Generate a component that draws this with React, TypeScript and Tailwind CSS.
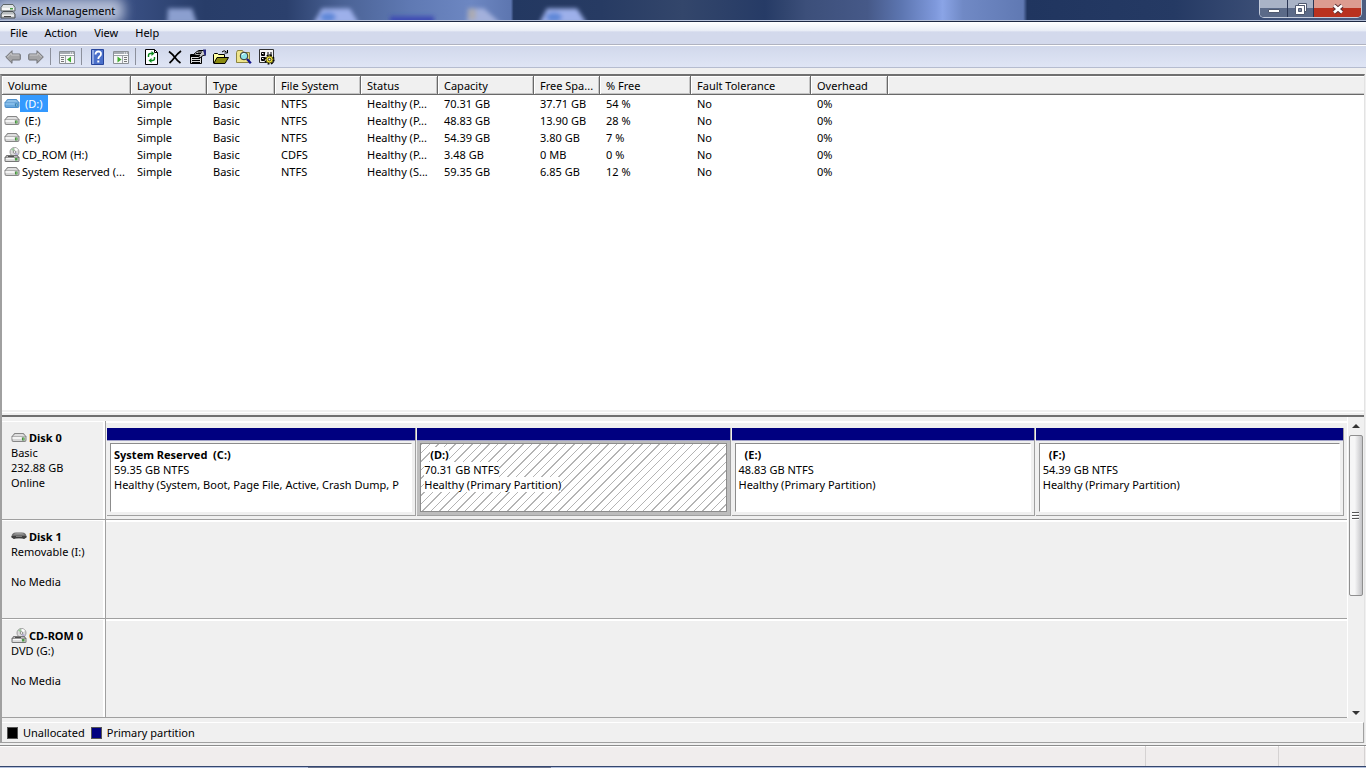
import type { ReactNode } from "react";
import clsx from "clsx";

type Volume = {
  name: string;
  fs: string;
  status: string;
  capacity: string;
  free: string;
  percent: string;
  icon: "drive" | "selected" | "cd";
};

const volumes: Volume[] = [
  { name: "(D:)", fs: "NTFS", status: "Healthy (P...", capacity: "70.31 GB", free: "37.71 GB", percent: "54 %", icon: "selected" },
  { name: "(E:)", fs: "NTFS", status: "Healthy (P...", capacity: "48.83 GB", free: "13.90 GB", percent: "28 %", icon: "drive" },
  { name: "(F:)", fs: "NTFS", status: "Healthy (P...", capacity: "54.39 GB", free: "3.80 GB", percent: "7 %", icon: "drive" },
  { name: "CD_ROM (H:)", fs: "CDFS", status: "Healthy (P...", capacity: "3.48 GB", free: "0 MB", percent: "0 %", icon: "cd" },
  { name: "System Reserved (...", fs: "NTFS", status: "Healthy (S...", capacity: "59.35 GB", free: "6.85 GB", percent: "12 %", icon: "drive" },
];

const columns = [
  { label: "Volume", width: "w-[129px]" },
  { label: "Layout", width: "w-[76px]" },
  { label: "Type", width: "w-[68px]" },
  { label: "File System", width: "w-[86px]" },
  { label: "Status", width: "w-[77px]" },
  { label: "Capacity", width: "w-[96px]" },
  { label: "Free Spa...", width: "w-[66px]" },
  { label: "% Free", width: "w-[91px]" },
  { label: "Fault Tolerance", width: "w-[120px]" },
  { label: "Overhead", width: "w-[77px]" },
];

const partitions = [
  { name: "System Reserved  (C:)", size: "59.35 GB NTFS", status: "Healthy (System, Boot, Page File, Active, Crash Dump, P", indent: false },
  { name: "(D:)", size: "70.31 GB NTFS", status: "Healthy (Primary Partition)", indent: true, selected: true },
  { name: "(E:)", size: "48.83 GB NTFS", status: "Healthy (Primary Partition)", indent: true },
  { name: "(F:)", size: "54.39 GB NTFS", status: "Healthy (Primary Partition)", indent: true },
];

function DriveIcon({ selected = false }: { selected?: boolean }) {
  return (
    <svg className="h-4 w-4 shrink-0" viewBox="0 0 16 16">
      <path d="M3.500 3h9l3 3.500v3.500q0 2-2 2h-11q-2 0-2-2v-3.500z" fill={selected ? "#4d8fcb" : "#868686"} />
      <path d="M4 4h8l2.500 2.500h-13z" fill={selected ? "#8dbfe8" : "#dedede"} />
      <path d="M1.500 7h13v3q0 1-1 1h-11q-1 0-1-1z" fill={selected ? "#6aa9df" : "#d6d6d6"} />
      <path d="M1.500 7h9v2h-9z" fill={selected ? "#84bce9" : "#f4f4f4"} />
      <path d="M11 7.500h2.500v3h-2.500z" fill={selected ? "#3f7fae" : "#4a8a45"} />
      <path d="M12 8h1v2h-1z" fill={selected ? "#74b4c8" : "#6fc062"} />
    </svg>
  );
}

function CdDriveIcon() {
  return (
    <svg className="h-4 w-4 shrink-0" viewBox="0 0 16 16">
      <circle cx="10.500" cy="5" r="4.500" fill="#dcdcdc" stroke="#9c9c9c" />
      <path d="M10.500 5L7 2.500Q8 1 10 1z" fill="#9cc79c" />
      <path d="M10.500 5l4 2q-1 2-3 2.200z" fill="#b9b4d4" />
      <path d="M10.500 5l.5-4q2 .3 3 1.800z" fill="#fff" />
      <circle cx="10.500" cy="5" r="1.300" fill="#fff" stroke="#777" strokeWidth=".8" />
      <path d="M2.500 8h11l2 2.500v3q0 1.500-1.500 1.500h-12q-1.500 0-1.500-1.500v-3z" fill="#777" />
      <path d="M3 9h10l1 1.500h-12z" fill="#bdbdbd" />
      <path d="M1.500 11h13v2.500q0 .5-.5.5h-12q-.5 0-.5-.5z" fill="#d8d8d8" />
      <path d="M2 11h8v1.200h-8z" fill="#fafafa" />
      <path d="M4 9h6v1h-6z" fill="#4f4f4f" />
      <path d="M11 11h2.500v2.500h-2.500z" fill="#4a9a45" />
    </svg>
  );
}

function RemovableIcon() {
  return (
    <svg className="h-4 w-4 shrink-0" viewBox="0 0 16 16">
      <path d="M.5 8q0-4.500 4.500-4.500h6q4.500 0 4.500 4.500l-2 1.500h-11z" fill="#6d6d6d" />
      <path d="M2.500 5.500q1-1.200 3.500-1.200h4q2.500 0 3.500 1.200z" fill="#a5a5a5" />
      <path d="M.5 7h15v1.500l-2.500 1.500q-1-1-5-1t-5 1L.5 8.500z" fill="#3e3e3e" />
      <path d="M5 7h6v1h-6z" fill="#7d7d7d" />
    </svg>
  );
}

function ArrowIcon({ flip = false }: { flip?: boolean }) {
  return (
    <svg className={clsx("h-4 w-4", flip && "-scale-x-100")} viewBox="0 0 16 16">
      <path d="M.7 8L7 1.700v3.300h7.500q.8 0 .8.800v4.400q0 .8-.8.800H7v3.300z" fill="#a4a4a6" stroke="#6f7074" />
      <path d="M2.500 8L6.200 4.200v1.800h8" fill="none" stroke="#c9c9cb" />
    </svg>
  );
}

function PaneIcon({ flip = false }: { flip?: boolean }) {
  return (
    <svg className="h-4 w-4" viewBox="0 0 16 16">
      <path d="M.5 2.500h15v12h-15z" fill="#f6f7f8" stroke="#8b9096" />
      <path d="M1 3h14v2h-14z" fill="#a6abb2" />
      <path d="M11 3.500h1v1h-1zM13 3.500h1v1h-1z" fill="#fff" />
      <path d="M1 5.500h14" stroke="#fff" />
      <path d="M1 6.500h14" stroke="#9da2a8" />
      {flip ? (
        <>
          <path d="M9.500 7v7" stroke="#9da2a8" />
          <path d="M11 8.500h3M11 10.500h3M11 12.500h3" stroke="#777" />
          <path d="M4.500 7.500v6l4-3z" fill="#3fae2e" />
        </>
      ) : (
        <>
          <path d="M6.500 7v7" stroke="#9da2a8" />
          <path d="M2 8.500h3M2 10.500h3M2 12.500h3" stroke="#777" />
          <path d="M12 7.500v6l-4-3z" fill="#3fae2e" />
        </>
      )}
    </svg>
  );
}

function HelpIcon() {
  return (
    <svg className="h-4 w-4" viewBox="0 0 16 16">
      <path d="M1.500.5h12v15h-12z" fill="#4a6fca" stroke="#27459c" />
      <path d="M2 1h2v14h-2z" fill="#8fa9e3" />
      <path d="M5.500 5.500q0-3 2.800-3t2.700 2.600q0 1.500-1.500 2.400-1.200.8-1.200 2.500" fill="none" stroke="#fff" strokeWidth="1.800" />
      <path d="M7.300 11.500h2v2h-2z" fill="#fff" />
    </svg>
  );
}

function RefreshIcon() {
  return (
    <svg className="h-4 w-4" viewBox="0 0 16 16">
      <path d="M1.500.5h9l3 3v12h-12z" fill="#fff" stroke="#000" />
      <path d="M10.500.5v3h3" fill="none" stroke="#000" />
      <path d="M4.500 8V6.500q0-2 2-2H8" fill="none" stroke="#0d8a1f" strokeWidth="1.400" />
      <path d="M7.500 2v5l3-2.500z" fill="#0d8a1f" />
      <path d="M10.500 8v1.500q0 2-2 2H7" fill="none" stroke="#0d8a1f" strokeWidth="1.400" />
      <path d="M7.500 9v5l-3-2.500z" fill="#0d8a1f" />
    </svg>
  );
}

function DeleteIcon() {
  return (
    <svg className="h-4 w-4" viewBox="0 0 16 16">
      <path d="M2 2.500q4 3 6 6t5.500 5.500M14 2q-4 3-6.500 6.500T2.500 14" fill="none" stroke="#000" strokeWidth="1.700" />
    </svg>
  );
}

function PropertiesIcon() {
  return (
    <svg className="h-4 w-4" viewBox="0 0 16 16">
      <path d="M.5 5.500h11v9h-11z" fill="#d8d8d8" stroke="#000" />
      <path d="M1 6h8v2h-8z" fill="#000" />
      <path d="M2 9.500h8M2 11.500h8M2 13.500h8" stroke="#000" />
      <path d="M3.500 5.500L7 2.500 9 1.500h4l2.500 1v3.500l-2.500.5-3 2.500-1.500-1 1.500-2-3 .5z" fill="#c9c9c9" stroke="#000" />
      <path d="M6 4.500h5M8 3h4" stroke="#000" />
      <path d="M13 .5h3v6h-1.500z" fill="#26267e" />
    </svg>
  );
}

function OpenIcon() {
  return (
    <svg className="h-4 w-4" viewBox="0 0 16 16">
      <path d="M.5 14V5.500l1-1h3l1 1h6v3" fill="#ffffa0" stroke="#000" />
      <path d="M.8 14.500L4 8.500h11.500l-3.500 6z" fill="#8a8a10" stroke="#000" />
      <path d="M9 3q2-2.500 4.500 0M14.500 1v3h-3" fill="none" stroke="#000" />
    </svg>
  );
}

function ExploreIcon() {
  return (
    <svg className="h-4 w-4" viewBox="0 0 16 16">
      <path d="M.5 3.500l1-2h5l1 2h6v10h-13z" fill="#efe58c" stroke="#8c8540" />
      <circle cx="8" cy="7" r="3.800" fill="#8ee4ea" stroke="#333" />
      <path d="M6 6q1-1.500 2.500-1.500" fill="none" stroke="#fff" />
      <path d="M11 10l3.800 4.200" stroke="#15158c" strokeWidth="2.400" />
    </svg>
  );
}

function SettingsIcon() {
  return (
    <svg className="h-4 w-4" viewBox="0 0 16 16">
      <path d="M.5.500h14v13h-14z" fill="#f4f4f4" stroke="#333" />
      <path d="M2.500 3.500h3v3h-3zM2.500 8.500h3v3h-3z" fill="#fff" stroke="#000" />
      <path d="M3 5l1 1 2-3M3 10l1 1 2-3" fill="none" stroke="#000" />
      <path d="M8 4h2M11 4h2M8 6h5" stroke="#000" />
      <circle cx="10.500" cy="10.500" r="4.200" fill="none" stroke="#000" strokeDasharray="1.700 1.600" strokeWidth="2" />
      <circle cx="10.500" cy="10.500" r="3.500" fill="#f0e43c" stroke="#5c5810" />
      <circle cx="10.500" cy="10.500" r="1.300" fill="#fff" stroke="#000" strokeWidth=".8" />
    </svg>
  );
}

function AppIcon() {
  return (
    <svg className="h-4 w-4" viewBox="0 0 16 16">
      <path d="M3 1.500h10l2 3v3.500h-14v-3.500z" fill="#dfe3e4" stroke="#5c6468" />
      <path d="M2 5h12v2h-12z" fill="#f7f7f7" />
      <path d="M10 5h3v1.500h-3z" fill="#4ba044" />
      <path d="M3 8.500h10l2 2.500v4h-14v-4z" fill="#b9bec0" stroke="#4a4f52" />
      <path d="M2 11.500h12v2h-12z" fill="#f0f0f0" />
      <path d="M4 13h7v1h-7z" fill="#444" />
    </svg>
  );
}

// Desktop seen through the glass caption
function GlassBackdrop() {
  return (
    <svg className="absolute inset-0 h-full w-full" viewBox="0 0 1366 22" preserveAspectRatio="none" aria-hidden="true">
      <defs>
        <linearGradient id="glass">
          <stop offset="0" stopColor="#40568a" />
          <stop offset=".09" stopColor="#3a5084" />
          <stop offset=".15" stopColor="#283d69" />
          <stop offset=".21" stopColor="#2b406d" />
          <stop offset=".25" stopColor="#4a6295" />
          <stop offset=".3" stopColor="#5f79b3" />
          <stop offset=".345" stopColor="#6d87c2" />
          <stop offset=".374" stopColor="#5d76b0" />
          <stop offset=".376" stopColor="#233861" />
          <stop offset=".44" stopColor="#273b63" />
          <stop offset=".5" stopColor="#33466b" />
          <stop offset=".56" stopColor="#263b66" />
          <stop offset=".575" stopColor="#31456f" />
          <stop offset=".59" stopColor="#3c4f7a" />
          <stop offset=".635" stopColor="#465988" />
          <stop offset=".66" stopColor="#5d76b1" />
          <stop offset=".685" stopColor="#7f99dc" />
          <stop offset=".69" stopColor="#8aa4e6" />
          <stop offset=".705" stopColor="#7089c5" />
          <stop offset=".749" stopColor="#6079b3" />
          <stop offset=".752" stopColor="#20355f" />
          <stop offset=".86" stopColor="#253a64" />
          <stop offset=".92" stopColor="#3a4d75" />
          <stop offset="1" stopColor="#4c5d80" />
        </linearGradient>
        <filter id="soft" x="-30%" y="-30%" width="160%" height="160%">
          <feGaussianBlur stdDeviation="2" />
        </filter>
        <filter id="glow" x="-20%" y="-80%" width="140%" height="260%">
          <feGaussianBlur stdDeviation="6" />
        </filter>
      </defs>
      <rect width="1366" height="22" fill="url(#glass)" />
      <g filter="url(#soft)">
        <path d="M168 9h24l5 16h-30z" fill="#8b9fcf" />
        <path d="M322 9h28l9 16h-46z" fill="#9db0ea" />
        <ellipse cx="328" cy="18" rx="8" ry="5" fill="#5f88d8" />
        <path d="M390 17h44v8h-44z" fill="#3d4cb4" />
        <path d="M468 9h16l17 16h-34z" fill="#a3b0dc" />
        <path d="M468 9h8v12h-8z" fill="#aaaab4" />
        <path d="M547 9h30l10 16h-48z" fill="#9db0ea" />
        <ellipse cx="554" cy="18" rx="8" ry="5" fill="#5f88d8" />
      </g>
      <rect x="-6" y="-2" width="130" height="26" rx="8" fill="#c8d0e4" opacity=".85" filter="url(#glow)" />
    </svg>
  );
}

function TitleBar() {
  return (
    <header className="relative flex h-[22px] items-center justify-between border-b border-[#1c2742] bg-[#283d69]">
      <GlassBackdrop />
      <div className="relative flex items-center gap-[5px]">
        <AppIcon />
        <h1>Disk Management</h1>
      </div>
      <div className="absolute inset-x-0 bottom-0 h-px bg-[#b3bed6]" />
      <div className="relative mr-1 flex h-[18px] self-start overflow-hidden rounded-b-[5px] border border-t-0 border-[#c3cbdb]">
        <button aria-label="Minimize" className="flex w-7 items-center justify-center border-r border-[#2a3654] bg-linear-to-b from-[#a9b3c6] from-45% to-[#5b6a88] to-50%">
          <svg className="mt-1 h-4 w-4" viewBox="0 0 16 16">
            <path d="M2.500 6.500h11v3h-11z" fill="#fff" stroke="#505a70" />
          </svg>
        </button>
        <button aria-label="Restore" className="flex w-[26px] items-center justify-center border-r border-[#2a3654] bg-linear-to-b from-[#a9b3c6] from-45% to-[#5b6a88] to-50%">
          <svg className="h-4 w-4" viewBox="0 0 16 16">
            <path d="M5.500 2.500h8v8h-2v-6h-6z" fill="#fff" stroke="#505a70" />
            <path d="M2.500 4.500h9v9h-9z" fill="#fff" stroke="#505a70" />
            <path d="M5.500 7.500h3v3h-3z" fill="#7c879c" stroke="#505a70" />
          </svg>
        </button>
        <button aria-label="Close" className="flex w-[47px] items-center justify-center bg-linear-to-b from-[#dc9c90] from-45% to-[#b9321f] to-50%">
          <svg className="h-4 w-4" viewBox="0 0 16 16">
            <path d="M4 4.500l8 7M12 4.500l-8 7" stroke="#5b3034" strokeWidth="4.500" />
            <path d="M4 4.500l8 7M12 4.500l-8 7" stroke="#fff" strokeWidth="2.600" />
          </svg>
        </button>
      </div>
    </header>
  );
}

function ToolButton({ label, children }: { label: string; children: ReactNode }) {
  return (
    <button aria-label={label} className="flex h-[21px] w-[23px] items-center justify-center">
      {children}
    </button>
  );
}

function ToolSeparator() {
  return (
    <div className="flex w-2 px-[3px]">
      <div className="h-[17px] w-px bg-[#8c909c]" />
    </div>
  );
}

function Toolbar() {
  return (
    <div className="flex h-[23px] items-center border-t border-b border-t-white border-b-[#b5bccf] bg-linear-to-b from-[#d1d8eb] to-[#dfe5f5] pl-px">
      <ToolButton label="Back"><ArrowIcon /></ToolButton>
      <ToolButton label="Forward"><ArrowIcon flip /></ToolButton>
      <ToolSeparator />
      <ToolButton label="Show/Hide Console Tree"><PaneIcon /></ToolButton>
      <ToolSeparator />
      <ToolButton label="Help"><HelpIcon /></ToolButton>
      <ToolButton label="Show/Hide Action Pane"><PaneIcon flip /></ToolButton>
      <ToolSeparator />
      <ToolButton label="Refresh"><RefreshIcon /></ToolButton>
      <ToolButton label="Delete"><DeleteIcon /></ToolButton>
      <ToolButton label="Properties"><PropertiesIcon /></ToolButton>
      <ToolButton label="Open"><OpenIcon /></ToolButton>
      <ToolButton label="Explore"><ExploreIcon /></ToolButton>
      <ToolButton label="Settings"><SettingsIcon /></ToolButton>
    </div>
  );
}

function VolumeTable() {
  return (
    <div className="min-h-0 flex-1 overflow-hidden bg-white">
      <table className="w-full table-fixed border-separate border-spacing-0">
        <thead>
          <tr className="h-[19px] bg-[#f0f0f0]">
            {columns.map((col) => (
              <th
                key={col.label}
                className={clsx(
                  "border-r border-b border-[#696969] p-0 pl-[6px] text-left font-normal whitespace-nowrap shadow-[inset_1px_1px_0_#fff,inset_-1px_-1px_0_#c4c4c4]",
                  col.width
                )}
              >
                {col.label}
              </th>
            ))}
            <th className="border-b border-[#696969] p-0 shadow-[inset_1px_1px_0_#fff,inset_0_-1px_0_#c4c4c4]" />
          </tr>
        </thead>
        <tbody>
          {volumes.map((v) => (
            <tr key={v.name} className="h-[17px] whitespace-nowrap [&>td]:p-0 [&>td]:pl-[6px]">
              <th className="p-0 pl-[2px] text-left font-normal">
                <div className="flex h-[17px] items-center">
                  {v.icon === "cd" ? <CdDriveIcon /> : <DriveIcon selected={v.icon === "selected"} />}
                  <span
                    className={clsx(
                      "h-[17px]",
                      v.name.length < 5 ? "px-[5px]" : "pl-[2px]",
                      v.icon === "selected" && "bg-[#3399ff] text-white"
                    )}
                  >
                    {v.name}
                  </span>
                </div>
              </th>
              <td>Simple</td>
              <td>Basic</td>
              <td>{v.fs}</td>
              <td>{v.status}</td>
              <td>{v.capacity}</td>
              <td>{v.free}</td>
              <td>{v.percent}</td>
              <td>No</td>
              <td>0%</td>
              <td />
            </tr>
          ))}
        </tbody>
      </table>
    </div>
  );
}

function DiskRow({ icon, name, lines, children }: { icon: ReactNode; name: string; lines: string[]; children?: ReactNode }) {
  return (
    <section className="flex h-[99px]">
      <div className="w-[104px] shrink-0 border-r border-b border-[#a0a0a0] pt-[9px] pl-[9px] leading-[15px] shadow-[inset_0_1px_0_#fff,inset_-2px_0_0_#fff]">
        <h2 className="flex h-[15px] items-center gap-[2px] font-bold">
          {icon}
          {name}
        </h2>
        {lines.map((line, i) => (
          <p key={i} className="h-[15px]">{line}</p>
        ))}
      </div>
      <div className="min-w-0 flex-1 border-b border-[#a0a0a0] shadow-[inset_0_2px_0_#fff]">{children}</div>
    </section>
  );
}

function PartitionMap() {
  return (
    <div className="grid grid-cols-[309fr_313fr_303fr_308fr] gap-x-px pt-[7px] pr-[3px] pl-px">
      {partitions.map((p) => (
        <button key={p.name} className="flex h-[88px] min-w-0 flex-col border-r border-b border-[#a0a0a0] text-left">
          <div className="h-3 w-full bg-[#000080]" />
          <div className="h-px w-full bg-[#a0a0c8]" />
          <div className={clsx("w-full min-h-0 flex-1 p-[3px] pt-[2px]", p.selected ? "bg-[#bdbdbd]" : "bg-[#f0f0f0]")}>
            <div
              className={clsx(
                "flex h-full flex-col items-start overflow-hidden border pt-[3px] pl-[3px] leading-[15px] whitespace-pre",
                p.selected
                  ? "border-[#8c8c8c] bg-white bg-[repeating-linear-gradient(135deg,#b4b4b4_0,#b4b4b4_1px,transparent_1px,transparent_6px)]"
                  : "border-t-[#8c8c8c] border-r-white border-b-white border-l-[#8c8c8c] bg-white"
              )}
            >
              <span className={clsx("bg-white font-bold", p.indent && "ml-[6px]")}>{p.name}</span>
              <span className="bg-white">{p.size}</span>
              <span className="bg-white">{p.status}</span>
            </div>
          </div>
        </button>
      ))}
    </div>
  );
}

function ScrollBar() {
  return (
    <div className="flex w-[17px] shrink-0 flex-col items-center border-l border-white bg-[#f0f0f0] pr-px">
      <button aria-label="Scroll up" className="flex h-[18px] w-full items-center justify-center">
        <svg className="h-1 w-2" viewBox="0 0 8 4"><path d="M4 0l4 4H0z" fill="#333" /></svg>
      </button>
      <div className="flex h-[161px] w-[14px] flex-col items-center justify-center gap-px rounded-[2px] border border-[#8f8f8f] bg-linear-to-r from-[#f6f6f6] from-40% to-[#c3c3c6]">
        {[0, 1, 2].map((n) => (
          <div key={n} className="h-[2px] w-[7px] border-t border-[#555] bg-white" />
        ))}
      </div>
      <div className="flex-1" />
      <button aria-label="Scroll down" className="flex h-[10px] w-full items-center justify-center">
        <svg className="h-1 w-2" viewBox="0 0 8 4"><path d="M0 0h8L4 4z" fill="#333" /></svg>
      </button>
    </div>
  );
}

export default function App() {
  return (
    <div className="flex h-screen flex-col overflow-hidden bg-[#f0f0f0] font-['Noto_Sans',sans-serif] text-[11px] leading-[17px] text-black">
      <TitleBar />

      <nav className="flex h-[23px] items-center gap-[17px] border-b border-[#b0b3c0] bg-linear-to-b from-white from-0% via-[#e9edf6] via-40% to-[#d3d9ec] to-45% pb-px pl-[10px]">
        {["File", "Action", "View", "Help"].map((item) => (
          <button key={item}>{item}</button>
        ))}
      </nav>
      <Toolbar />

      <main className="mt-[6px] mr-px flex min-h-0 flex-1 flex-col border-t-2 border-r border-l-2 border-t-[#707070] border-r-[#e3e3e3] border-l-[#a0a0a0]">
        <VolumeTable />
        <div className="h-[7px] shrink-0 border-b-2 border-[#707070] bg-[#f0f0f0] shadow-[inset_0_2px_0_#f0f0f0,inset_0_3px_0_#fff]" />

        <div className="flex shrink-0">
          <div className="min-w-0 flex-1 pt-1">
            <DiskRow icon={<DriveIcon />} name="Disk 0" lines={["Basic", "232.88 GB", "Online"]}>
              <PartitionMap />
            </DiskRow>
            <DiskRow icon={<RemovableIcon />} name="Disk 1" lines={["Removable (I:)", "", "No Media"]} />
            <DiskRow icon={<CdDriveIcon />} name="CD-ROM 0" lines={["DVD (G:)", "", "No Media"]} />
          </div>
          <ScrollBar />
        </div>

        <div className="mt-1 flex h-[21px] shrink-0 items-center border-t border-r border-b border-t-white border-r-[#a0a0a0] border-b-[#a0a0a0] pl-[5px]">
          <span className="mr-[5px] h-3 w-[11px] border border-[#555] bg-black" />
          Unallocated
          <span className="mr-[5px] ml-[6px] h-3 w-[11px] border border-[#555] bg-[#000080]" />
          Primary partition
        </div>
      </main>

      <footer className="mt-[2px] flex h-[21px] shrink-0 border-t border-[#8c8c8c] bg-[#f0eded] shadow-[inset_0_1px_0_#fff]">
        <div className="flex-1 border-r border-[#d5d2d2]" />
        <div className="w-[133px] border-r border-[#d5d2d2]" />
        <div className="mr-px w-[86px] border-r border-[#d5d2d2]" />
      </footer>
      <div className="h-[2px] shrink-0 border-t border-[#34466e] bg-[#b4c0dc]">
        <div className="ml-[308px] h-px w-[243px] bg-[#6f7892]" />
      </div>
    </div>
  );
}
